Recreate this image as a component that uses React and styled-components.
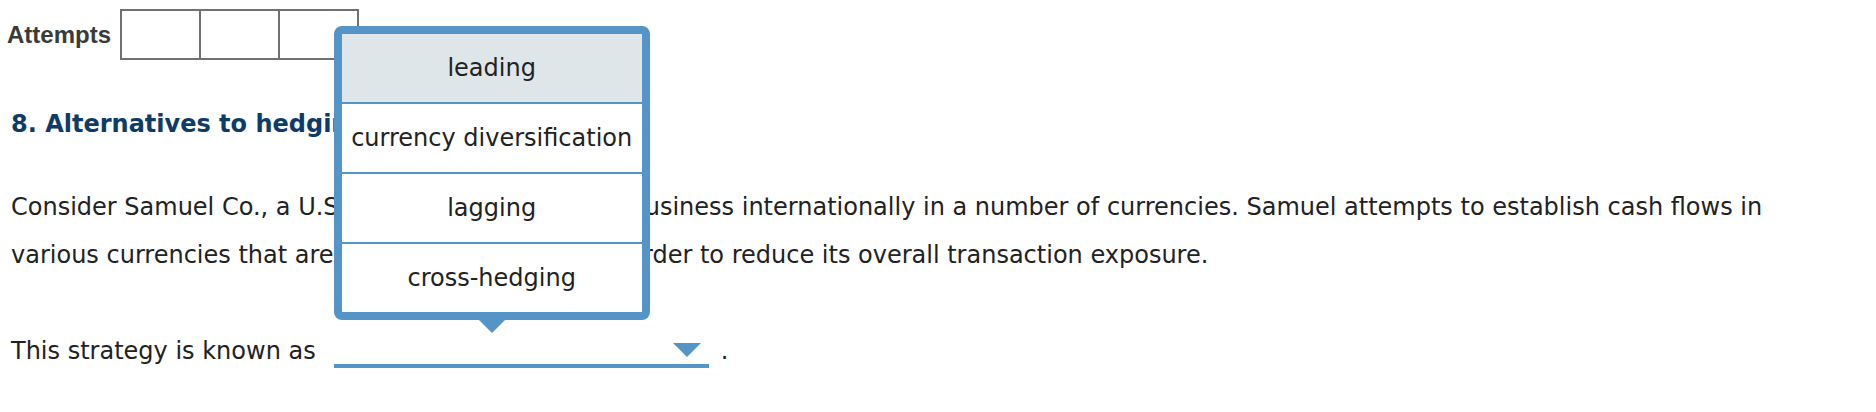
import React from "react";
import styled, { createGlobalStyle } from "styled-components";

const GlobalStyle = createGlobalStyle`
  html, body {
    margin: 0;
    padding: 0;
    background: #ffffff;
  }
  body {
    font-family: "DejaVu Sans", Verdana, sans-serif;
    font-size: 24px;
    color: #222222;
  }
`;

const Page = styled.div`
  width: 1876px;
  height: 412px;
  overflow: hidden;
  display: flex;
  flex-direction: column;
`;

const AttemptsRow = styled.div`
  display: flex;
  align-items: center;
  gap: 9px;
  padding: 9px 0 0 7px;
`;

const AttemptsLabel = styled.span`
  font-family: "Liberation Sans", Arial, sans-serif;
  font-weight: bold;
  font-size: 24px;
  color: #3a3a3a;
`;

const AttemptBoxes = styled.div`
  display: flex;
`;

const AttemptBox = styled.div`
  box-sizing: border-box;
  width: 81px;
  height: 51px;
  border: 2px solid #717171;
  background: #ffffff;
  & + & {
    margin-left: -2px;
  }
`;

const Heading = styled.h2`
  margin: 46px 0 0 0;
  padding-left: 11px;
  font-size: 24px;
  line-height: 36px;
  font-weight: bold;
  color: #0e3b67;
`;

const Paragraph = styled.p`
  margin: 41px 0 0 0;
  padding-left: 11px;
  width: 1790px;
  font-size: 24px;
  line-height: 48px;
`;

const StrategyLine = styled.div`
  margin-top: 48px;
  padding-left: 11px;
  height: 48px;
  display: flex;
  align-items: center;
`;

const SelectWrap = styled.div`
  position: relative;
  margin-left: 18px;
  margin-top: 2px;
`;

const SelectBox = styled.div`
  box-sizing: border-box;
  width: 375px;
  height: 32px;
  border-bottom: 4px solid #5594c6;
  display: flex;
  align-items: center;
  justify-content: flex-end;
  padding-right: 8px;
`;

const SelectCaret = styled.span`
  width: 0;
  height: 0;
  border-left: 14px solid transparent;
  border-right: 14px solid transparent;
  border-top: 14px solid #5594c6;
`;

const Period = styled.span`
  margin-left: 12px;
`;

const Menu = styled.ul`
  position: absolute;
  left: 0;
  bottom: 48px;
  box-sizing: border-box;
  width: 316px;
  margin: 0;
  padding: 0;
  list-style: none;
  border: 8px solid #5594c6;
  border-radius: 8px;
  background: #ffffff;
  z-index: 10;

  &::after {
    content: "";
    position: absolute;
    left: 50%;
    top: calc(100% + 7px);
    transform: translateX(-50%);
    width: 0;
    height: 0;
    border-left: 14px solid transparent;
    border-right: 14px solid transparent;
    border-top: 14px solid #5594c6;
  }
`;

const MenuItem = styled.li`
  height: 68px;
  display: flex;
  align-items: center;
  justify-content: center;
  font-size: 24px;
  color: #222222;
  white-space: nowrap;
  background: ${(p) => (p.$active ? "#dee6e9" : "#ffffff")};
  & + & {
    border-top: 2px solid #5594c6;
  }
`;

const options = ["leading", "currency diversification", "lagging", "cross-hedging"];

export default function App() {
  return (
    <Page>
      <GlobalStyle />
      <AttemptsRow>
        <AttemptsLabel>Attempts</AttemptsLabel>
        <AttemptBoxes>
          <AttemptBox />
          <AttemptBox />
          <AttemptBox />
        </AttemptBoxes>
      </AttemptsRow>
      <Heading>8. Alternatives to hedging</Heading>
      <Paragraph>
        Consider Samuel Co., a U.S. company that does its business internationally in a
        number of currencies. Samuel attempts to establish cash flows in various currencies
        that are not highly correlated in order to reduce its overall transaction exposure.
      </Paragraph>
      <StrategyLine>
        This strategy is known as
        <SelectWrap>
          <SelectBox>
            <SelectCaret />
          </SelectBox>
          <Menu>
            {options.map((o, i) => (
              <MenuItem key={o} $active={i === 0}>
                {o}
              </MenuItem>
            ))}
          </Menu>
        </SelectWrap>
        <Period>.</Period>
      </StrategyLine>
    </Page>
  );
}
